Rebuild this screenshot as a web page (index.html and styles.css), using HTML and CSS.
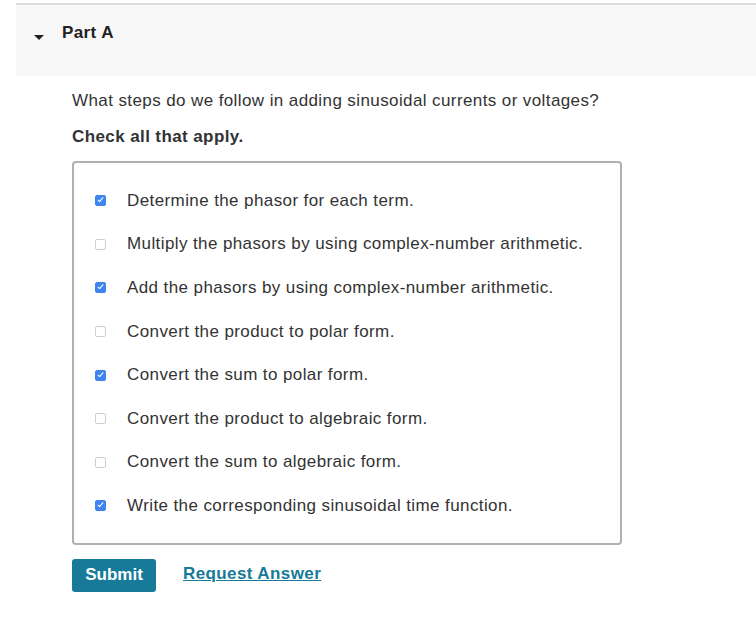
FILE: index.html
```html
<!DOCTYPE html>
<html lang="en">
  <head>
    <meta charset="UTF-8" />
    <meta name="viewport" content="width=device-width, initial-scale=1.0" />
    <title>Part A</title>
    <link rel="stylesheet" href="styles.css">
  </head>

  <body>
    <div class="part">
      <div class="part-header">
        <span class="caret"></span>
        <h3>Part A</h3>
      </div>
      <div class="part-body">
        <p class="question">What steps do we follow in adding sinusoidal currents or voltages?</p>
        <p class="instruction">Check all that apply.</p>
        <div class="choices">
          <label class="choice"><span class="box checked"></span>Determine the phasor for each term.</label>
          <label class="choice"><span class="box"></span>Multiply the phasors by using complex-number arithmetic.</label>
          <label class="choice"><span class="box checked"></span>Add the phasors by using complex-number arithmetic.</label>
          <label class="choice"><span class="box"></span>Convert the product to polar form.</label>
          <label class="choice"><span class="box checked"></span>Convert the sum to polar form.</label>
          <label class="choice"><span class="box"></span>Convert the product to algebraic form.</label>
          <label class="choice"><span class="box"></span>Convert the sum to algebraic form.</label>
          <label class="choice"><span class="box checked"></span>Write the corresponding sinusoidal time function.</label>
        </div>
        <div class="actions">
          <button type="button" class="button">Submit</button>
          <a href="#" class="link">Request Answer</a>
        </div>
      </div>
    </div>
  </body>
</html>
```

FILE: styles.css
```css
body {
  font-family: "Liberation Sans", Arial, sans-serif;
  margin: 0;
  background-color: white;
  color: #333;
  letter-spacing: 0.4px;
}

.part {
  padding-top: 3px;
}

.part-header {
  margin-left: 16px;
  border-top: 2px solid #dcdcdc;
  background-color: #f8f8f8;
  height: 71px;
  display: flex;
  align-items: flex-start;
}

.caret {
  width: 0;
  height: 0;
  border-left: 5px solid transparent;
  border-right: 5px solid transparent;
  border-top: 5px solid #222;
  margin: 30px 0 0 18px;
}

.part-header h3 {
  margin: 18px 0 0 18px;
  font-size: 17px;
  line-height: 20px;
  color: #222;
}

.part-body {
  padding-left: 72px;
}

.question {
  margin: 15px 0 0 0;
  font-size: 17px;
  line-height: 20px;
}

.instruction {
  margin: 16px 0 0 0;
  font-size: 17px;
  line-height: 20px;
  font-weight: bold;
}

.choices {
  width: 546px;
  margin-top: 14px;
  border: 2px solid #b0b0b0;
  border-radius: 4px;
  padding: 16px 0 15px 0;
}

.choice {
  display: flex;
  align-items: center;
  height: 43.6px;
  font-size: 17px;
  color: #333;
}

.box {
  width: 9px;
  height: 9px;
  margin: 0 21px 0 21px;
  border: 1px solid #cfcfcf;
  border-radius: 2px;
  background-color: white;
  position: relative;
}

.box.checked {
  border-color: #3f85f0;
  background-color: #3f85f0;
}

.box.checked::after {
  content: "";
  position: absolute;
  left: 3px;
  top: 0px;
  width: 2px;
  height: 5px;
  border-right: 1.5px solid white;
  border-bottom: 1.5px solid white;
  transform: rotate(40deg);
}

.actions {
  display: flex;
  align-items: center;
  margin-top: 14px;
}

.button {
  font-family: "Liberation Sans", Arial, sans-serif;
  width: 84px;
  height: 33px;
  padding: 0;
  font-size: 17px;
  font-weight: bold;
  background-color: #177a98;
  color: white;
  border: none;
  border-radius: 3px;
}

.link {
  margin-left: 27px;
  font-size: 17px;
  font-weight: bold;
  color: #177a98;
  text-decoration: underline;
  padding-bottom: 2px;
}
```
